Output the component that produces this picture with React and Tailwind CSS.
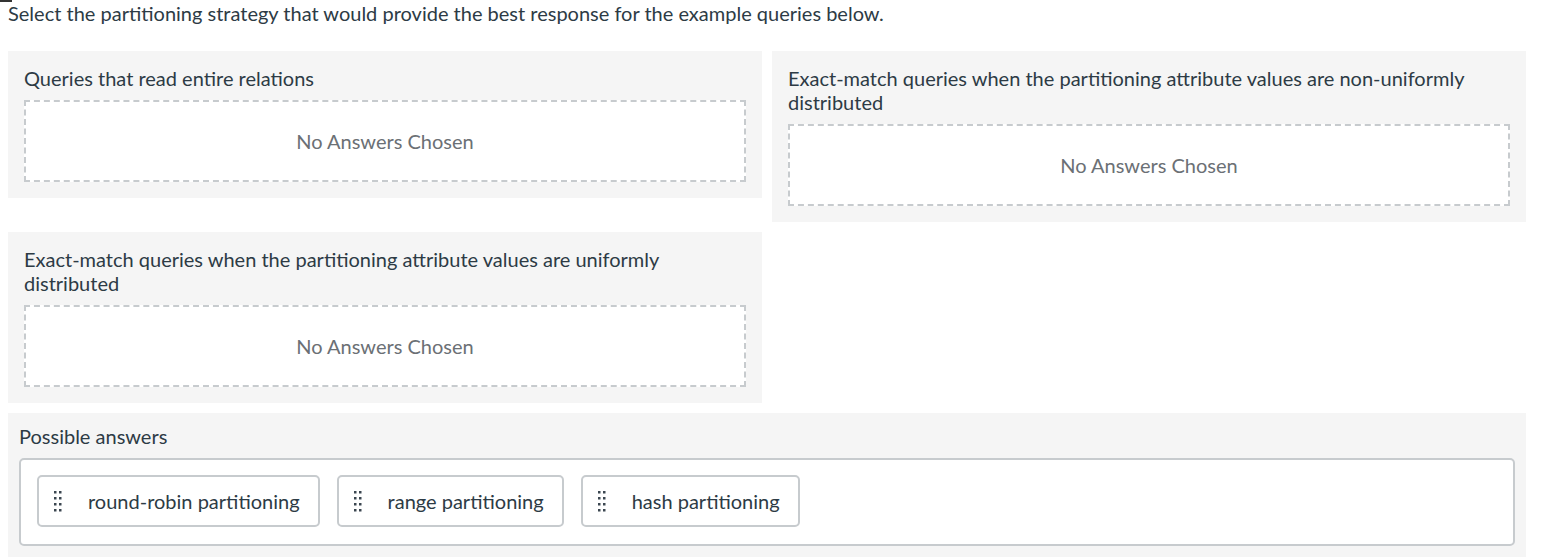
import React from "react";

function Grip() {
  return (
    <svg width="9" height="24" viewBox="0 0 9 24" className="shrink-0">
      {[0, 1, 2, 3].map((r) =>
        [0, 1].map((c) => (
          <rect key={`${r}-${c}`} x={1 + c * 5} y={2 + r * 6} width="2.5" height="2.5" fill="#3b4650" />
        ))
      )}
    </svg>
  );
}

function DropPanel({ label }) {
  return (
    <div className="bg-[#f5f5f5] px-4 pt-[15px] pb-4">
      <div className="text-[20px] leading-6 text-[#2d3b45] mb-[10px]">{label}</div>
      <div className="h-[82px] bg-white border-2 border-dashed border-[#c7cbce] flex items-center justify-center text-[20px] text-[#6b7075]">
        No Answers Chosen
      </div>
    </div>
  );
}

function Chip({ text }) {
  return (
    <div className="h-[52px] flex items-center border-2 border-[#c7cbce] rounded-[5px] bg-white pl-[14px] pr-[18px]">
      <Grip />
      <span className="ml-[26px] text-[20px] text-[#2d3b45]">{text}</span>
    </div>
  );
}

export default function App() {
  return (
    <div className="relative bg-white w-[1542px] h-[560px] overflow-hidden font-['Lato','Liberation_Sans',sans-serif] pl-2 pr-4">
      <div className="absolute left-0 top-0 w-[12px] h-[2px] bg-[#333]" />
      <div className="pt-[1px] text-[20px] leading-6 text-[#2d3b45]">
        Select the partitioning strategy that would provide the best response for the example queries below.
      </div>
      <div className="mt-[26px] grid grid-cols-2 gap-x-[10px] gap-y-[10px] items-start">
        <DropPanel label="Queries that read entire relations" />
        <DropPanel label="Exact-match queries when the partitioning attribute values are non-uniformly distributed" />
        <DropPanel label="Exact-match queries when the partitioning attribute values are uniformly distributed" />
      </div>
      <div className="mt-[10px] bg-[#f5f5f5] px-[11px] pt-[11px] pb-[11px]">
        <div className="text-[20px] leading-6 text-[#2d3b45]">Possible answers</div>
        <div className="mt-[10px] border-2 border-[#c7cbce] rounded-[5px] bg-white px-4 pt-[15px] pb-[17px] flex gap-[17px]">
          <Chip text="round-robin partitioning" />
          <Chip text="range partitioning" />
          <Chip text="hash partitioning" />
        </div>
      </div>
    </div>
  );
}
